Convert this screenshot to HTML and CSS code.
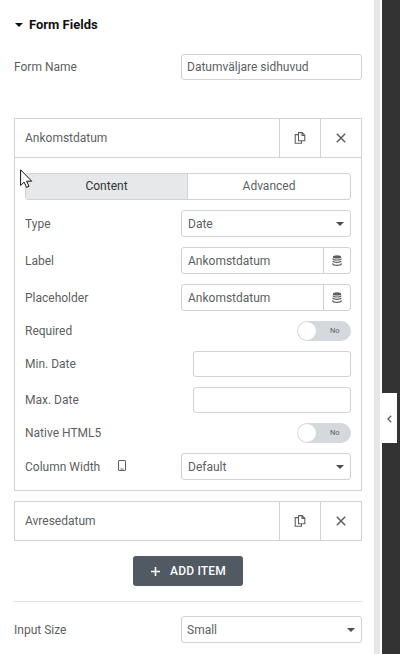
FILE: index.html
```html
<!DOCTYPE html>
<html lang="en">
<head>
<meta charset="utf-8">
<title>Form Fields</title>
<link rel="stylesheet" href="styles.css">
</head>
<body>
<svg class="defs" width="0" height="0">
  <symbol id="copy" viewBox="0 0 12 12">
    <path d="M4.500.6h3.700l2.600 2.600v5.600h-6.300zM8 .8v2.600h2.600M4.300 2.600H1.200v8.700h6.300V9" fill="none" stroke="currentColor" stroke-width="1.100"/>
  </symbol>
  <symbol id="close" viewBox="0 0 10 10">
    <path d="M.8.8l8.400 8.400M9.200.8L.8 9.200" fill="none" stroke="currentColor" stroke-width="1.500"/>
  </symbol>
  <symbol id="database" viewBox="0 0 10 11">
    <ellipse cx="5" cy="1.900" rx="4.200" ry="1.700" fill="currentColor"/>
    <path d="M.8 3.600q.4 1.400 4.200 1.400t4.200-1.400M.8 5.900q.4 1.400 4.200 1.400t4.200-1.400M.8 8.200V9q.4 1.300 4.200 1.300T9.200 9v-.8" fill="none" stroke="currentColor" stroke-width="1.200"/>
  </symbol>
</svg>
<div class="app">
  <main class="panel">
    <h1 class="title"><i class="caret"></i>Form Fields</h1>
    <div class="row form-name"><span>Form Name</span><div class="field wide short">Datumväljare sidhuvud</div></div>
    <section class="item">
      <header class="item-head"><span class="item-title">Ankomstdatum</span><span class="tool"><svg width="12" height="12"><use href="#copy"/></svg></span><span class="tool"><svg width="10" height="10"><use href="#close"/></svg></span></header>
      <div class="controls">
        <div class="tabs"><span class="tab active">Content</span><span class="tab">Advanced</span></div>
        <div class="row"><span>Type</span><div class="field">Date<i class="caret"></i></div></div>
        <div class="row"><span>Label</span><div class="field">Ankomstdatum<span class="dynamic"><svg width="10" height="11"><use href="#database"/></svg></span></div></div>
        <div class="row"><span>Placeholder</span><div class="field">Ankomstdatum<span class="dynamic"><svg width="10" height="11"><use href="#database"/></svg></span></div></div>
        <div class="row"><span>Required</span><div class="switch"><i class="knob"></i><span class="state">No</span></div></div>
        <div class="row"><span>Min. Date</span><div class="field date short"></div></div>
        <div class="row"><span>Max. Date</span><div class="field date short"></div></div>
        <div class="row"><span>Native HTML5</span><div class="switch"><i class="knob"></i><span class="state">No</span></div></div>
        <div class="row"><span>Column Width<svg class="device" width="8" height="12" viewBox="0 0 8 12"><rect x=".5" y=".5" width="7" height="10" rx=".5" fill="none" stroke="currentColor"/><path d="M2.500 9h3" stroke="currentColor"/></svg></span><div class="field">Default<i class="caret"></i></div></div>
      </div>
    </section>
    <section class="item">
      <header class="item-head"><span class="item-title">Avresedatum</span><span class="tool"><svg width="12" height="12"><use href="#copy"/></svg></span><span class="tool"><svg width="10" height="10"><use href="#close"/></svg></span></header>
    </section>
    <div class="add"><svg width="9" height="9" viewBox="0 0 9 9"><path d="M4.500 0v9M0 4.500h9" stroke="currentColor" stroke-width="1.600"/></svg><span>ADD ITEM</span></div>
    <div class="row input-size"><span>Input Size</span><div class="field wide">Small<i class="caret"></i></div></div>
  </main>
  <div class="scrollbar"></div>
  <aside class="preview"><div class="handle"><svg width="5" height="8" viewBox="0 0 5 8"><path d="M4.200.7L1 4l3.200 3.300" fill="none" stroke="currentColor" stroke-width="1.300"/></svg></div></aside>
</div>
<svg class="cursor" width="13" height="20" viewBox="0 0 13 20"><path d="M.6.8v15.700l3.500-3.400 2.500 5.300 2.400-1.100-2.400-5.100h5.100z" fill="#fff" stroke="#111" stroke-width="1"/></svg>
</body>
</html>
```

FILE: styles.css
```css
* { box-sizing: border-box; }
body {
  margin: 0;
  font: 12px/16px Roboto, sans-serif;
  color: #5c5f62;
  background: #fff;
  overflow: hidden;
}
svg { display: block; }
.defs { position: absolute; }
.app { display: flex; height: 654px; }
.panel { width: 374px; padding: 16px 12px 0 14px; }
.scrollbar { width: 6px; background: #e6e6e6; }
.preview {
  width: 18px;
  margin-left: 2px;
  background: #333;
  padding-top: 393px;
}
.handle {
  width: 15px;
  height: 50px;
  background: #fff;
  display: flex;
  align-items: center;
  justify-content: center;
  padding-top: 1px;
}
.title {
  margin: 0 0 21px;
  height: 17px;
  font-size: 13px;
  line-height: 17px;
  font-weight: 700;
  color: #111;
  display: flex;
  align-items: flex-start;
  gap: 6px;
}
.title .caret { margin: 7px 0 0 1px; }
.caret {
  border: 4px solid transparent;
  border-top-color: currentColor;
  border-bottom: 0;
}
.row { display: flex; align-items: center; justify-content: space-between; }
.row > span { display: flex; align-items: center; }
.form-name { margin-bottom: 38px; }
.field {
  width: 170px;
  height: 27px;
  border: 1px solid #d0d2d5;
  border-radius: 3px;
  padding-left: 6px;
  display: flex;
  align-items: center;
  justify-content: space-between;
}
.wide { width: 181px; padding-left: 5px; }
.panel > .row { width: 348px; }
.date { width: 158px; }
.short { height: 26px; }
.field .caret { margin-right: 6px; color: #4a4d51; }
.dynamic {
  width: 27px;
  height: 25px;
  border-left: 1px solid #d0d2d5;
  display: flex;
  align-items: center;
  justify-content: center;
}
.item { width: 348px; border: 1px solid #d0d2d5; margin-bottom: 10px; }
.item-head { display: flex; height: 38px; align-items: stretch; }
.item-title { flex: 1; padding-left: 10px; line-height: 38px; }
.tool {
  width: 41px;
  border-left: 1px solid #d0d2d5;
  display: flex;
  align-items: center;
  justify-content: center;
}
.controls {
  border-top: 1px solid #d0d2d5;
  padding: 15px 10px 10px;
  display: flex;
  flex-direction: column;
  gap: 10px;
}
.tabs {
  display: grid;
  grid-template-columns: 162px 162px;
  height: 27px;
  border: 1px solid #d0d2d5;
  border-radius: 3px;
  overflow: hidden;
}
.tab { text-align: center; line-height: 25px; }
.active { background: #e6e8ea; color: #333; border-right: 1px solid #d0d2d5; }
.switch {
  width: 54px;
  height: 20px;
  border-radius: 10px;
  background: #d5d8dc;
  padding: 1px;
  display: flex;
  align-items: center;
}
.knob { width: 18px; height: 18px; border-radius: 50%; background: #fff; }
.state { font-size: 7.5px; margin-left: 14px; line-height: 18px; }
.device { margin-left: 18px; margin-bottom: 1px; }
.add {
  width: 110px;
  height: 30px;
  margin: 15px 0 15px 119px;
  padding-left: 1px;
  border-radius: 3px;
  background: #515962;
  color: #fff;
  font-weight: 500;
  letter-spacing: .2px;
  display: flex;
  align-items: center;
  justify-content: center;
  gap: 10px;
}
.input-size { border-top: 1px solid #e0e2e4; padding-top: 14px; }
.cursor { position: absolute; left: 20px; top: 169px; }
```
